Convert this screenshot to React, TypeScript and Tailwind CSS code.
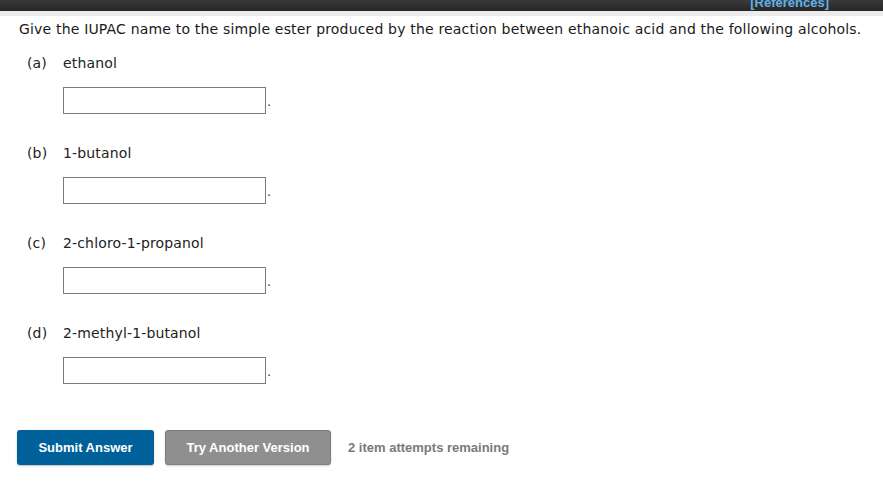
const items = [
  { label: "(a)", name: "ethanol" },
  { label: "(b)", name: "1-butanol" },
  { label: "(c)", name: "2-chloro-1-propanol" },
  { label: "(d)", name: "2-methyl-1-butanol" },
];

export default function App() {
  return (
    <div className="w-[883px] h-[496px] bg-white overflow-hidden font-['DejaVu_Sans',Verdana,sans-serif]">
      {/* top bar */}
      <div className="h-[11px] bg-gradient-to-b from-[#3a3a3a] to-[#262626] overflow-hidden flex justify-end pr-[54px]">
        <span className="text-[13px] leading-[13px] -mt-[4px] font-bold text-[#5fb2e8] font-['Liberation_Sans',Arial,sans-serif]">
          [References]
        </span>
      </div>
      <div className="h-[5px] bg-[#ececec]" />

      <div className="pl-[19px] pt-[3px] text-[14px] tracking-[0.18px] leading-[20px] text-[#1a1a1a]">
        Give the IUPAC name to the simple ester produced by the reaction between ethanoic acid and the following alcohols.
      </div>

      <div className="pl-[27px] pt-[15px] flex flex-col">
        {items.map((it) => (
          <div key={it.label} className="h-[90px]">
            <div className="flex text-[14px] tracking-[0.15px] leading-[18px] text-[#222]">
              <span className="w-[36px]">{it.label}</span>
              <span>{it.name}</span>
            </div>
            <div className="flex items-end pl-[36px] mt-[15px]">
              <div className="w-[203px] h-[27px] border border-[#7b7b7b] bg-white" />
              <span className="text-[13px] leading-[13px] ml-[1px] mb-[6px] text-[#333]">.</span>
            </div>
          </div>
        ))}
      </div>

      <div className="flex items-center pl-[17px] mt-[16px] font-['Liberation_Sans',Arial,sans-serif] text-[13px] font-bold">
        <button className="w-[137px] h-[35px] rounded-[3px] bg-[#00619a] text-white shadow-[0_1px_2px_rgba(0,0,0,0.25)]">
          Submit Answer
        </button>
        <button className="ml-[11px] w-[166px] h-[35px] rounded-[3px] bg-[#8f8f8f] border border-[#7d7d7d] text-white shadow-[0_1px_2px_rgba(0,0,0,0.2)]">
          Try Another Version
        </button>
        <span className="ml-[17px] text-[#7a7a7a]">2 item attempts remaining</span>
      </div>
    </div>
  );
}
